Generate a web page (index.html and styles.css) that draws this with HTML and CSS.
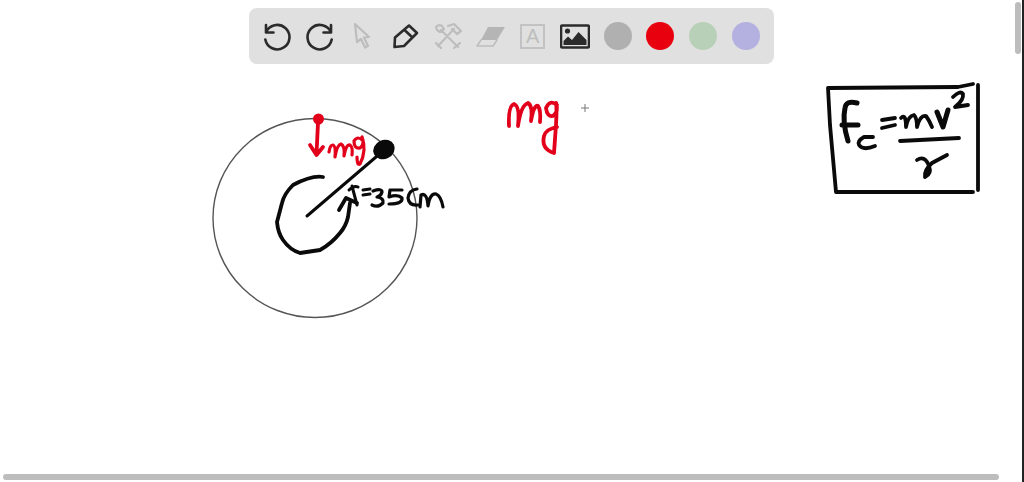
FILE: index.html
```html
<!DOCTYPE html>
<html lang="en">
<head>
<meta charset="utf-8">
<title>Whiteboard</title>
<link rel="stylesheet" href="styles.css">
</head>
<body>
<main class="stage">
  <svg class="board" viewBox="0 0 1024 482" role="img" aria-label="Whiteboard: circle of radius 350 cm with weight mg at the top; formula Fc = mv squared over r">
    <ellipse class="orbit" cx="315" cy="218" rx="102" ry="99.5"/>
    <g class="ink-red">
      <circle class="dot-red" cx="318.5" cy="119" r="5.5"/>
      <path d="M318 123 L316.5 154 M310 145 L316.5 155 L323 147"/>
      <path class="thin" d="M329 152 Q330 145 333 145 Q336 146 335 157 Q337 145 341 144 Q345 146 344 156 Q346 144 350 145 Q353 147 352 155"/>
      <path class="thin" d="M363 141 Q358 135 354 141 Q354 149 360 148 Q365 144 362 137 Q367 150 360 164 Q357 166 357 157"/>
      <path d="M509 126 Q508 106 514 104 Q520 106 518 126 Q521 105 528 103 Q533 106 531 121 Q534 104 538 106 Q541 110 540 122"/>
      <path d="M557 105 Q550 99 546 108 Q547 117 553 116 Q559 112 556 103 Q557 108 556 125 L554 153 Q541 149 544 136 Q546 129 557 127"/>
    </g>
    <g class="ink">
      <ellipse class="blob" cx="384" cy="149.5" rx="11" ry="9.5" transform="rotate(-25 384 149.5)"/>
      <path class="medium" d="M383 151 L307 216"/>
      <path class="heavy" d="M323 177 Q312 175 293 185 Q284 194 282 203 L277 222 Q278 233 283 240 Q290 250 300 253 L320 250 Q331 244 340 233 Q346 226 348 217 L350 203 M339 210 L346 198 L357 203"/>
      <path class="medium" d="M352 186 L357 205 M349 190 Q354 185 358 187"/>
      <path class="medium" d="M363 190 L370 189 M363 195 L370 194"/>
      <path d="M373 191 Q382 188 382 192 Q381 196 377 197 Q384 198 383 203 Q378 208 372 205"/>
      <path d="M402 190 L390 190 L389 197 Q398 194 402 198 Q403 204 389 204"/>
      <path d="M417 189 Q409 190 408 198 Q409 206 418 205"/>
      <path d="M420 207 L421 195 Q427 192 428 206 Q430 193 436 194 Q441 196 443 207"/>
      <path class="heavy" d="M828 88 L958 87 L973 84 M828 88 L830 125 L836 192 L973 192 M978 85 L978 190"/>
      <path class="bolder" d="M857 103 Q846 100 845 108 Q842 122 848 141 M842 125 L858 125"/>
      <path class="heavy" d="M873 137 L864 137 Q857 141 859 145 Q863 151 875 146"/>
      <path class="heavy" d="M882 120 L895 118 M882 128 L895 125"/>
      <path class="heavy" d="M901 118 Q906 113 906 127 Q908 116 914 115 Q917 118 917 127 Q920 115 926 116 Q929 120 932 127"/>
      <path class="bolder" d="M937 112 L943 127 L948 110"/>
      <path class="heavy" d="M953 97 Q960 90 963 94 Q964 100 955 107 L968 105"/>
      <path class="heavy" d="M900 141 L959 138"/>
      <path class="heavy" d="M917 160 Q925 155 929 166 Q932 174 925 177 Q924 170 932 163 L947 155"/>
    </g>
    <path class="cursor" d="M581 108 H589 M585 104 V112"/>
  </svg>

  <nav class="toolbar" aria-label="Drawing tools">
    <span class="tool">
      <svg class="icon" viewBox="0 0 30 30"><path class="line" d="M4 4 V11.5 H11.5 M4 11.5 A12.2 12.2 0 1 1 3.3 18.5"/></svg>
    </span>
    <span class="tool">
      <svg class="icon" viewBox="0 0 30 30"><path class="line" d="M26 4 V11.5 H18.5 M26 11.5 A12.2 12.2 0 1 0 26.7 18.5"/></svg>
    </span>
    <span class="tool off">
      <svg class="icon" viewBox="0 0 30 30"><path class="line mid-line" d="M8 3 L22 16 L17 16.5 L21 25 L18 26.5 L14 18 L10 21 Z"/></svg>
    </span>
    <span class="tool">
      <svg class="icon" viewBox="0 0 30 30"><path class="line" d="M19 4.5 L27 12 L14 25 L4.5 26 L5 16.5 Z M14.5 9 L22.5 16.5"/></svg>
    </span>
    <span class="tool off">
      <svg class="icon" viewBox="0 0 30 30"><path class="line mid-line" d="M8 9 L25 26 M21 27 L27 22 M21 8 L5 25 M3 22 L8 27 M15 5 L21 3 L28 10 L24 13 L19 8 M3 6 Q6 3 9 5 L11 8 L7 11 L4 9 Z"/></svg>
    </span>
    <span class="tool off">
      <svg class="icon" viewBox="0 0 30 30"><path class="fill-off" d="M13 6 L30 6 L22 19 L6 19 Z"/><path class="line thin-line" d="M6 19 L2 25 L18 25 L22 19"/></svg>
    </span>
    <span class="tool off">
      <span class="letter">A</span>
    </span>
    <span class="tool">
      <svg class="icon" viewBox="0 0 30 30"><rect class="line" x="1" y="4.5" width="28" height="22" rx="1.5"/><circle class="solid" cx="7.5" cy="10" r="2.6"/><path class="solid" d="M3.5 24 L3.5 20 L8 15.5 L12 19 L18.5 11 L26.5 19 L26.5 24 Z"/></svg>
    </span>
    <span class="tool"><span class="swatch grey"></span></span>
    <span class="tool"><span class="swatch red"></span></span>
    <span class="tool"><span class="swatch green"></span></span>
    <span class="tool"><span class="swatch violet"></span></span>
  </nav>

  <div class="scroll-v"></div>
  <div class="scroll-h"></div>
</main>
</body>
</html>
```

FILE: styles.css
```css
* { box-sizing: border-box; }
html, body { margin: 0; height: 100%; background: #fff; overflow: hidden; }
.stage { position: relative; width: 1024px; height: 482px; font-family: "Liberation Sans", sans-serif; }
.board { display: block; width: 1024px; height: 482px; filter: blur(0.35px); }
.board path { fill: none; stroke-linecap: round; stroke-linejoin: round; }
.orbit { fill: none; stroke: #555; stroke-width: 1.4; }
.ink-red path { stroke: #e3001b; stroke-width: 3.8; }
.ink-red path.thin { stroke-width: 3.2; }
.dot-red { fill: #e3001b; }
.ink path { stroke: #0a0a0a; stroke-width: 3.2; }
.ink path.medium { stroke-width: 3; }
.ink path.heavy { stroke-width: 3.8; }
.ink path.bolder { stroke-width: 5; }
.blob { fill: #0a0a0a; }
.board path.cursor { stroke: #777; stroke-width: 1; stroke-linecap: butt; }

.toolbar {
  position: absolute; top: 8px; left: 249px; width: 525px; height: 56px;
  display: flex; align-items: center; padding: 0 7px;
  background: #e0e0e0; border-radius: 8px;
}
.tool { flex: 1 1 0; display: flex; align-items: center; justify-content: center; height: 100%; }
.icon { width: 30px; height: 30px; display: block; }
.line { fill: none; stroke: #2b2b2b; stroke-width: 2.6; stroke-linecap: round; stroke-linejoin: round; }
.mid-line { stroke-width: 2.2; }
.thin-line { stroke-width: 1.6; }
.off .line { stroke: #bdbdbd; }
.fill-off { fill: #b5b5b5; }
.solid { fill: #2b2b2b; }
.letter {
  width: 25px; height: 25px; display: flex; align-items: center; justify-content: center;
  border: 2px solid #c2c2c2; color: #bdbdbd; font-size: 20px; line-height: 1;
}
.swatch { width: 28px; height: 28px; border-radius: 50%; display: block; }
.grey { background: #b0b0b0; }
.red { background: #e8000f; }
.green { background: #b8d0b8; }
.violet { background: #b4b0e0; }

.scroll-v { position: absolute; top: 2px; left: 1015px; width: 6px; height: 52px; background: #bdbdbd; border-radius: 3px; }
.scroll-v::after { content: ""; position: absolute; top: -2px; left: 7px; width: 2px; height: 482px; background: #222; }
.scroll-h { position: absolute; top: 474px; left: 3px; width: 996px; height: 6px; background: #bdbdbd; border-radius: 3px; }
```
